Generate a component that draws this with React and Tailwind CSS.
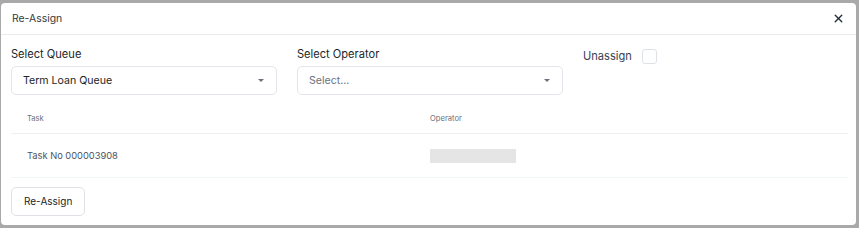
import { X } from 'lucide-react';

function Caret() {
  return (
    <svg width="8" height="5" viewBox="0 0 8 5" className="shrink-0">
      <path d="M1 1 L4 4 L7 1 Z" fill="#6b7280" />
    </svg>
  );
}

function SelectBox({ value, placeholder }) {
  return (
    <div className="h-[29px] border border-[#e3e5ea] rounded-[5px] flex items-center justify-between pl-[11px] pr-[11px] bg-white">
      {value ? (
        <span className="text-[10.6px] text-[#212529]">{value}</span>
      ) : (
        <span className="text-[10.6px] text-[#6b7280]">{placeholder}</span>
      )}
      <Caret />
    </div>
  );
}

export default function App() {
  return (
    <div className="w-[859px] h-[228px] bg-[#a9a9a9] pt-[3px] pl-[1px] pr-[3px] pb-[3px] font-['Inter',sans-serif]">
      <div className="h-full bg-white rounded-[4px] flex flex-col">
        <div className="h-[32px] flex items-center justify-between pl-[11px] pr-[11px] border-b border-[#e9ecef]">
          <span className="text-[10.4px] text-[#343a40]">Re-Assign</span>
          <X size={13} strokeWidth={2.5} className="text-[#1f2937]" />
        </div>

        <div className="pl-[10px] pr-[8px] pt-[10px] flex flex-col">
          <div className="grid grid-cols-[266px_266px_1fr] gap-x-[20px]">
            <div className="flex flex-col gap-[3px]">
              <label className="text-[11.1px] text-[#212529] leading-[18px]">Select Queue</label>
              <SelectBox value="Term Loan Queue" />
            </div>
            <div className="flex flex-col gap-[3px]">
              <label className="text-[11.1px] text-[#212529] leading-[18px]">Select Operator</label>
              <SelectBox placeholder="Select..." />
            </div>
            <div className="flex items-start gap-[10px] pt-[1px]">
              <span className="text-[11.1px] text-[#374151] leading-[20px]">Unassign</span>
              <span className="mt-[3px] w-[15px] h-[15px] border border-[#dee2e6] rounded-[3px] bg-white" />
            </div>
          </div>

          <div className="mt-[16px]">
            <div className="grid grid-cols-[403px_1fr] h-[23px] items-start border-b border-[#eef0f3]">
              <span className="pl-[16px] text-[7.6px] text-[#6b7280] leading-[12px] mt-[2px]">Task</span>
              <span className="pl-[16px] text-[7.6px] text-[#6b7280] leading-[12px] mt-[2px]">Operator</span>
            </div>
            <div className="grid grid-cols-[403px_1fr] h-[44px] items-center border-b border-[#f0f7f7]">
              <span className="pl-[16px] text-[9.3px] text-[#4b5563]">Task No 000003908</span>
              <div className="ml-[16px] w-[86px] h-[14px] bg-[#e5e5e5]" />
            </div>
          </div>

          <div className="mt-[9px]">
            <button className="h-[29px] px-[12px] border border-[#dee2e6] rounded-[5px] text-[10px] text-[#212529] bg-white">
              Re-Assign
            </button>
          </div>
        </div>
      </div>
    </div>
  );
}
